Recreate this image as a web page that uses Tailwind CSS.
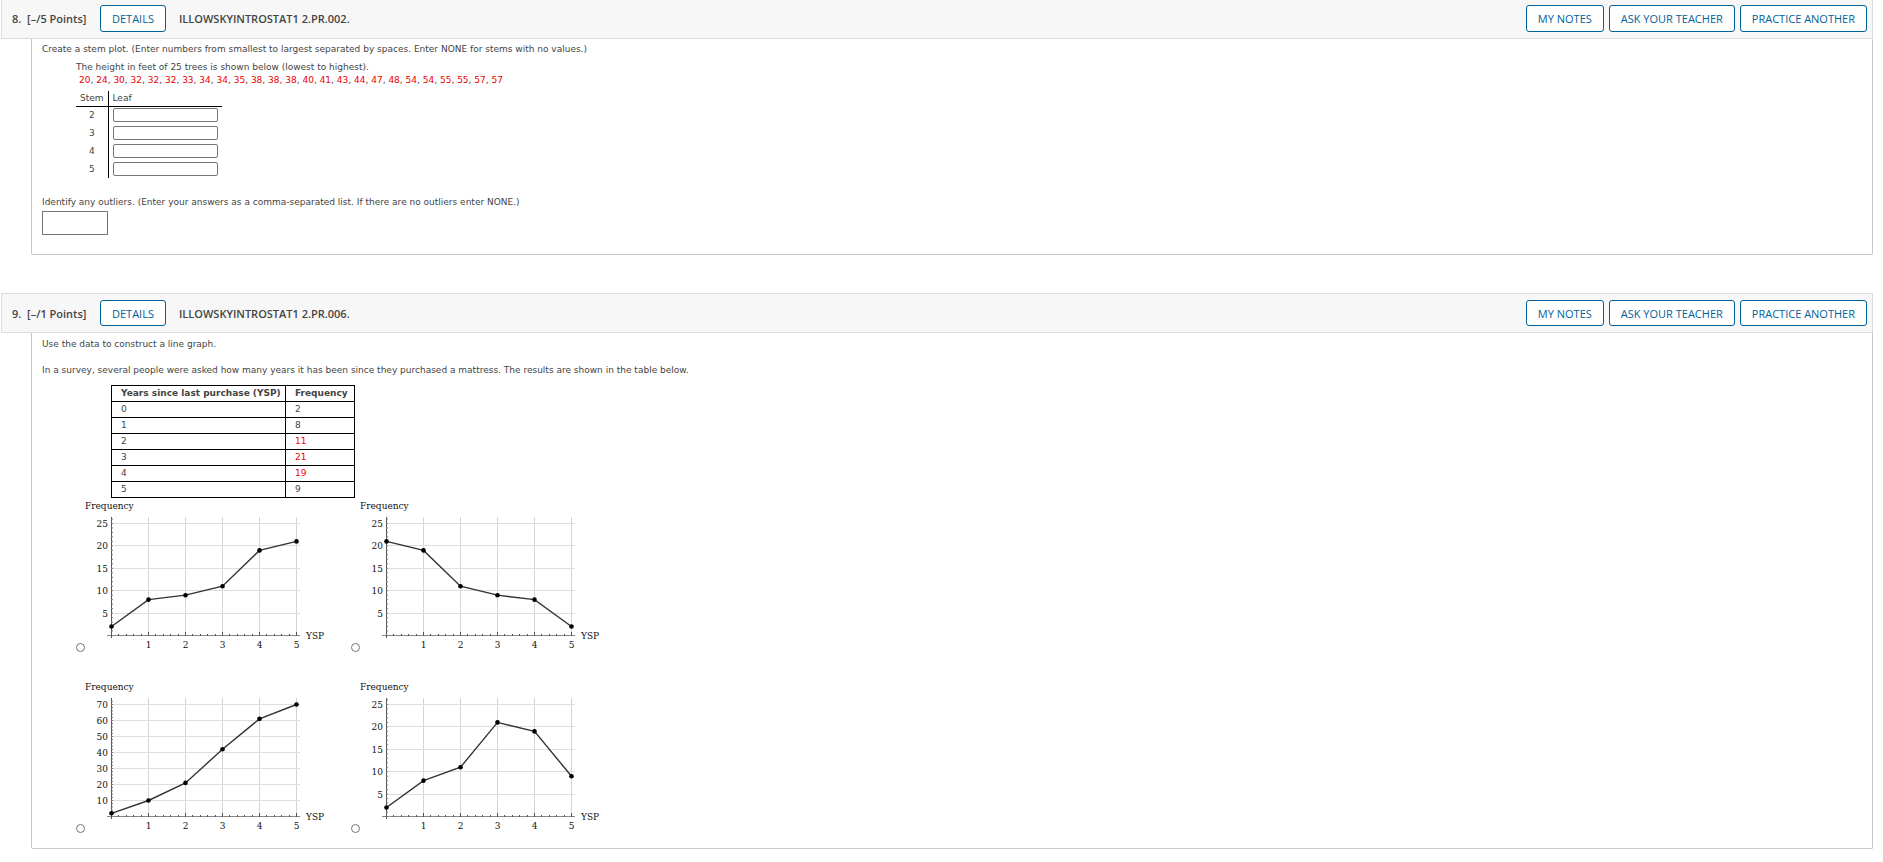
<!DOCTYPE html>
<html lang="en">
<head>
    <meta charset="UTF-8">
    <meta name="viewport" content="width=device-width, initial-scale=1.0">
    <title>Homework</title>
    <script src="https://cdn.jsdelivr.net/npm/@tailwindcss/browser@4"></script>
</head>
<body class="bg-white pr-[10px] pl-px font-['DejaVu_Sans',Verdana,sans-serif] text-[9px] leading-[13px] text-[#444]">

    <!-- Question 8 -->
    <section class="mb-[38px]">
        <header class="flex items-center justify-between border border-t-0 border-[#ddd] bg-[#f7f7f7] pt-[5px] pr-[5px] pb-[6px] pl-[10px] font-['Open_Sans',sans-serif] text-[11px]">
            <div class="flex items-center">
                <h2 class="w-[88px] font-semibold whitespace-pre">8.  [–/5 Points]</h2>
                <button class="h-[27px] rounded-[3px] border border-[#006298] bg-white px-[11px] font-medium text-[#006298]">DETAILS</button>
                <span class="ml-[13px] font-semibold">ILLOWSKYINTROSTAT1 2.PR.002.</span>
            </div>
            <div class="flex gap-[5px]">
                <button class="h-[27px] rounded-[3px] border border-[#006298] bg-white px-[11px] font-medium text-[#006298]">MY NOTES</button>
                <button class="h-[27px] rounded-[3px] border border-[#006298] bg-white px-[11px] font-medium text-[#006298]">ASK YOUR TEACHER</button>
                <button class="h-[27px] rounded-[3px] border border-[#006298] bg-white px-[11px] font-medium text-[#006298]">PRACTICE ANOTHER</button>
            </div>
        </header>
        <div class="ml-[30px] rounded-b-[2px] border border-t-0 border-[#c8c8c8] px-[10px] pt-[4px] pb-[19px]">
            <p>Create a stem plot. (Enter numbers from smallest to largest separated by spaces. Enter NONE for stems with no values.)</p>
            <div class="mt-[5px] ml-[34px]">
                <p>The height in feet of 25 trees is shown below (lowest to highest).</p>
                <p class="pl-[3px]"><span class="text-[#e00]">20</span>, <span class="text-[#e00]">24</span>, <span class="text-[#e00]">30</span>, <span class="text-[#e00]">32</span>, <span class="text-[#e00]">32</span>, <span class="text-[#e00]">32</span>, <span class="text-[#e00]">33</span>, <span class="text-[#e00]">34</span>, <span class="text-[#e00]">34</span>, <span class="text-[#e00]">35</span>, <span class="text-[#e00]">38</span>, <span class="text-[#e00]">38</span>, <span class="text-[#e00]">38</span>, <span class="text-[#e00]">40</span>, <span class="text-[#e00]">41</span>, <span class="text-[#e00]">43</span>, <span class="text-[#e00]">44</span>, <span class="text-[#e00]">47</span>, <span class="text-[#e00]">48</span>, <span class="text-[#e00]">54</span>, <span class="text-[#e00]">54</span>, <span class="text-[#e00]">55</span>, <span class="text-[#e00]">55</span>, <span class="text-[#e00]">57</span>, <span class="text-[#e00]">57</span></p>
                <table class="mt-[4px] border-collapse text-center">
                    <thead>
                        <tr class="h-[15px] border-b border-black">
                            <th class="w-[32px] border-r border-black p-0 font-normal">Stem</th>
                            <th class="p-0 pl-[4px] text-left font-normal">Leaf</th>
                        </tr>
                    </thead>
                    <tbody>
                        <tr class="h-[18px]">
                            <td class="border-r border-black p-0">2</td>
                            <td class="p-0 px-[4px]"><input type="text" aria-label="Leaves for stem 2" class="block h-[14px] w-[105px] rounded-[2px] border border-[#767676] bg-white"></td>
                        </tr>
                        <tr class="h-[18px]">
                            <td class="border-r border-black p-0">3</td>
                            <td class="p-0 px-[4px]"><input type="text" aria-label="Leaves for stem 3" class="block h-[14px] w-[105px] rounded-[2px] border border-[#767676] bg-white"></td>
                        </tr>
                        <tr class="h-[18px]">
                            <td class="border-r border-black p-0">4</td>
                            <td class="p-0 px-[4px]"><input type="text" aria-label="Leaves for stem 4" class="block h-[14px] w-[105px] rounded-[2px] border border-[#767676] bg-white"></td>
                        </tr>
                        <tr class="h-[18px]">
                            <td class="border-r border-black p-0">5</td>
                            <td class="p-0 px-[4px]"><input type="text" aria-label="Leaves for stem 5" class="block h-[14px] w-[105px] rounded-[2px] border border-[#767676] bg-white"></td>
                        </tr>
                    </tbody>
                </table>
            </div>
            <label for="outliers" class="mt-[18px] block">Identify any outliers. (Enter your answers as a comma-separated list. If there are no outliers enter NONE.)</label>
            <input type="text" id="outliers" class="mt-[2px] block h-[24px] w-[66px] border border-[#767676] bg-white">
        </div>
    </section>

    <!-- Question 9 -->
    <section>
        <header class="flex items-center justify-between border border-[#ddd] bg-[#f7f7f7] py-[6px] pr-[5px] pl-[10px] font-['Open_Sans',sans-serif] text-[11px]">
            <div class="flex items-center">
                <h2 class="w-[88px] font-semibold whitespace-pre">9.  [–/1 Points]</h2>
                <button class="h-[26px] rounded-[3px] border border-[#006298] bg-white px-[11px] font-medium text-[#006298]">DETAILS</button>
                <span class="ml-[13px] font-semibold">ILLOWSKYINTROSTAT1 2.PR.006.</span>
            </div>
            <div class="flex gap-[5px]">
                <button class="h-[26px] rounded-[3px] border border-[#006298] bg-white px-[11px] font-medium text-[#006298]">MY NOTES</button>
                <button class="h-[26px] rounded-[3px] border border-[#006298] bg-white px-[11px] font-medium text-[#006298]">ASK YOUR TEACHER</button>
                <button class="h-[26px] rounded-[3px] border border-[#006298] bg-white px-[11px] font-medium text-[#006298]">PRACTICE ANOTHER</button>
            </div>
        </header>
        <div class="ml-[30px] rounded-b-[2px] border border-t-0 border-[#c8c8c8] px-[10px] pt-[5px] pb-[10px]">
            <p>Use the data to construct a line graph.</p>
            <p class="mt-[13px]">In a survey, several people were asked how many years it has been since they purchased a mattress. The results are shown in the table below.</p>
            <table class="mt-[8px] ml-[69px] w-[244px] table-fixed border-collapse text-left">
                <thead>
                    <tr class="h-[16px]">
                        <th class="w-[174px] border border-black p-0 pl-[9px] font-bold whitespace-nowrap">Years since last purchase (YSP)</th>
                        <th class="border border-black p-0 pl-[9px] font-bold">Frequency</th>
                    </tr>
                </thead>
                <tbody>
                    <tr class="h-[16px]">
                        <td class="border border-black p-0 pl-[9px]">0</td>
                        <td class="border border-black p-0 pl-[9px]">2</td>
                    </tr>
                    <tr class="h-[16px]">
                        <td class="border border-black p-0 pl-[9px]">1</td>
                        <td class="border border-black p-0 pl-[9px]">8</td>
                    </tr>
                    <tr class="h-[16px]">
                        <td class="border border-black p-0 pl-[9px]">2</td>
                        <td class="border border-black p-0 pl-[9px] text-[#e00]">11</td>
                    </tr>
                    <tr class="h-[16px]">
                        <td class="border border-black p-0 pl-[9px]">3</td>
                        <td class="border border-black p-0 pl-[9px] text-[#e00]">21</td>
                    </tr>
                    <tr class="h-[16px]">
                        <td class="border border-black p-0 pl-[9px]">4</td>
                        <td class="border border-black p-0 pl-[9px] text-[#e00]">19</td>
                    </tr>
                    <tr class="h-[16px]">
                        <td class="border border-black p-0 pl-[9px]">5</td>
                        <td class="border border-black p-0 pl-[9px]">9</td>
                    </tr>
                </tbody>
            </table>

            <!-- Answer choices, graphs are drawn by the script below -->
            <div class="mt-px ml-[34px] grid grid-cols-[275px_275px] gap-y-[23px]">
                <label class="flex items-end">
                    <input type="radio" name="graph" aria-label="Graph A" class="mb-[5px] size-[9px] shrink-0 appearance-none rounded-full border border-[#767676] bg-white checked:bg-[#006298]">
                    <svg class="chart font-['DejaVu_Serif',serif] text-[9px]" width="260" height="158" data-values="2,8,9,11,19,21" data-step="5" data-max="25"></svg>
                </label>
                <label class="flex items-end">
                    <input type="radio" name="graph" aria-label="Graph B" class="mb-[5px] size-[9px] shrink-0 appearance-none rounded-full border border-[#767676] bg-white checked:bg-[#006298]">
                    <svg class="chart font-['DejaVu_Serif',serif] text-[9px]" width="260" height="158" data-values="21,19,11,9,8,2" data-step="5" data-max="25"></svg>
                </label>
                <label class="flex items-end">
                    <input type="radio" name="graph" aria-label="Graph C" class="mb-[5px] size-[9px] shrink-0 appearance-none rounded-full border border-[#767676] bg-white checked:bg-[#006298]">
                    <svg class="chart font-['DejaVu_Serif',serif] text-[9px]" width="260" height="158" data-values="2,10,21,42,61,70" data-step="10" data-max="70"></svg>
                </label>
                <label class="flex items-end">
                    <input type="radio" name="graph" aria-label="Graph D" class="mb-[5px] size-[9px] shrink-0 appearance-none rounded-full border border-[#767676] bg-white checked:bg-[#006298]">
                    <svg class="chart font-['DejaVu_Serif',serif] text-[9px]" width="260" height="158" data-values="2,8,11,21,19,9" data-step="5" data-max="25"></svg>
                </label>
            </div>
        </div>
    </section>

    <script>
        const X0 = 26, Y0 = 136, DX = 37, PLOT_H = 112;

        function line(x1, y1, x2, y2, color) {
            return `<line x1="${x1}" y1="${y1}" x2="${x2}" y2="${y2}" stroke="${color}"/>`;
        }

        function text(x, y, anchor, value) {
            return `<text x="${x}" y="${y}" text-anchor="${anchor}" fill="#111">${value}</text>`;
        }

        document.querySelectorAll('.chart').forEach(svg => {
            const values = svg.dataset.values.split(',').map(Number);
            const step = Number(svg.dataset.step);
            const max = Number(svg.dataset.max);
            const px = i => X0 + 0.5 + i * DX;
            const py = v => Y0 + 0.5 - v * PLOT_H / max;
            let out = text(0, 10, 'start', 'Frequency');

            // grid lines and labels
            for (let i = 1; i <= 5; i++) {
                out += line(px(i), 18, px(i), Y0, '#d4d4d4');
                out += text(px(i), Y0 + 13, 'middle', i);
            }
            for (let v = step; v <= max; v += step) {
                const y = Math.floor(py(v)) + 0.5;
                out += line(X0, y, X0 + 189, y, '#dedede');
                out += text(X0 - 3, y + 3, 'end', v);
            }

            // axes with minor ticks
            out += line(X0 - 4, Y0 + 0.5, X0 + 189, Y0 + 0.5, '#888');
            out += line(X0 + 0.5, 18, X0 + 0.5, Y0 + 3, '#555');
            for (let i = 1; i <= 25; i++) {
                const x = Math.round(i * DX / 5) + X0 + 0.5;
                out += line(x, Y0 - (i % 5 ? 1 : 3), x, Y0 + 1, '#555');
            }
            const minor = step === 5 ? 1 : 2;
            for (let v = minor; v <= max * 1.04; v += minor) {
                out += line(X0, py(v), X0 + 2, py(v), '#777');
            }
            out += text(X0 + 195, Y0 + 4, 'start', 'YSP');

            // data
            const pts = values.map((v, i) => [px(i), py(v)]);
            out += `<polyline points="${pts.join(' ')}" fill="none" stroke="#333" stroke-width="1.4"/>`;
            pts.forEach(([x, y]) => out += `<circle cx="${x}" cy="${y}" r="2.3" fill="#000"/>`);
            svg.innerHTML = out;
        });
    </script>
</body>
</html>
